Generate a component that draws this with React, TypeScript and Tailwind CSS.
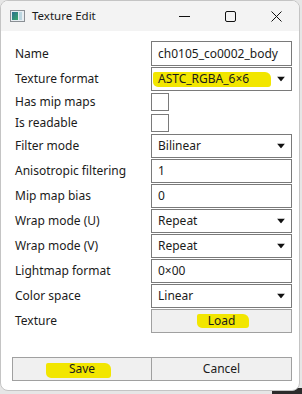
import React from "react";

const font = { fontFamily: '"Segoe UI", "Noto Sans", "Open Sans", sans-serif' };

function Arrow() {
  return (
    <svg width="8" height="5" viewBox="0 0 8 5" className="absolute right-[6px] top-1/2 -translate-y-1/2">
      <path d="M0 0 H8 L4 5 Z" fill="#111" />
    </svg>
  );
}

function Box({ children, select, h = "h-[24px]" }: { children?: React.ReactNode; select?: boolean; h?: string }) {
  return (
    <div className={`relative ${h} w-[141px] border border-[#7a7a7a] bg-white flex items-center pl-[6px] text-[12px] text-[#1b1b1b]`}>
      {children}
      {select && <Arrow />}
    </div>
  );
}

function Row({ label, children, h = "h-[24px]", mt = "mt-[1px]" }: { label: string; children: React.ReactNode; h?: string; mt?: string }) {
  return (
    <div className={`flex ${mt}`}>
      <div className={`w-[139px] ${h} flex items-center pl-[3px] text-[12px] text-[#1b1b1b]`}>{label}</div>
      {children}
    </div>
  );
}

function Highlight({ className }: { className: string }) {
  return <div className={`absolute bg-[#f2e600] ${className}`} style={{ borderRadius: "2px 6px 3px 5px" }} />;
}

export default function App() {
  return (
    <div className="relative w-[302px] h-[394px] bg-[#e6e6e6] overflow-hidden" style={font}>
      <div className="absolute right-0 bottom-0 w-[30px] h-[6px] bg-[#2b2b2b]" />
      <div className="relative w-[300px] h-[391px] bg-white border border-[#c4c4c4] rounded-[8px] overflow-hidden flex flex-col">
        {/* title bar */}
        <div className="h-[30px] bg-[#f3f3f3] flex items-center shrink-0">
          <svg width="15" height="12" viewBox="0 0 15 12" className="ml-[9px]">
            <rect x="0.5" y="0.5" width="14" height="11" fill="#e8eef2" stroke="#8a8f94" />
            <defs>
              <linearGradient id="g" x1="0" y1="0" x2="1" y2="1">
                <stop offset="0" stopColor="#2c6f8f" />
                <stop offset="1" stopColor="#3aa86a" />
              </linearGradient>
            </defs>
            <rect x="2" y="2" width="6" height="8" fill="url(#g)" />
            <rect x="9" y="2" width="3" height="8" fill="#bcd6e0" />
          </svg>
          <span className="ml-[7px] text-[11.5px] text-[#1a1a1a]">Texture Edit</span>
          <div className="ml-auto flex items-center h-full">
            <div className="w-[46px] h-full flex items-center justify-center">
              <svg width="11" height="11" viewBox="0 0 11 11"><path d="M0 5.5 H11" stroke="#111" strokeWidth="1" /></svg>
            </div>
            <div className="w-[46px] h-full flex items-center justify-center">
              <svg width="11" height="11" viewBox="0 0 11 11"><rect x="0.5" y="0.5" width="10" height="10" rx="1.5" fill="none" stroke="#111" /></svg>
            </div>
            <div className="w-[46px] h-full flex items-center justify-center">
              <svg width="11" height="11" viewBox="0 0 11 11"><path d="M0.5 0.5 L10.5 10.5 M10.5 0.5 L0.5 10.5" stroke="#111" strokeWidth="1" /></svg>
            </div>
          </div>
        </div>

        {/* form */}
        <div className="pl-[11px] pt-[10px] flex flex-col">
          <Row label="Name" h="h-[25px]" mt="mt-0">
            <Box h="h-[25px]">ch0105_co0002_body</Box>
          </Row>
          <Row label="Texture format">
            <Box select>
              <Highlight className="left-[1px] top-[4px] w-[118px] h-[15px]" />
              <span className="relative">ASTC_RGBA_6×6</span>
            </Box>
          </Row>
          <Row label="Has mip maps" h="h-[18px]" mt="mt-[2px]">
            <div className="w-[18px] h-[18px] border border-[#7a7a7a] bg-white" />
          </Row>
          <Row label="Is readable" h="h-[18px]" mt="mt-[3px]">
            <div className="w-[18px] h-[18px] border border-[#7a7a7a] bg-white" />
          </Row>
          <Row label="Filter mode" mt="mt-[2px]">
            <Box select>Bilinear</Box>
          </Row>
          <Row label="Anisotropic filtering">
            <Box>1</Box>
          </Row>
          <Row label="Mip map bias">
            <Box>0</Box>
          </Row>
          <Row label="Wrap mode (U)">
            <Box select>Repeat</Box>
          </Row>
          <Row label="Wrap mode (V)">
            <Box select>Repeat</Box>
          </Row>
          <Row label="Lightmap format">
            <Box>0×00</Box>
          </Row>
          <Row label="Color space">
            <Box select>Linear</Box>
          </Row>
          <Row label="Texture">
            <div className="relative w-[141px] h-[24px] border border-[#a0a0a0] bg-[#f0f0f0] flex items-center justify-center text-[12px] text-[#1b1b1b]">
              <Highlight className="left-[45px] top-[4px] w-[52px] h-[14px]" />
              <span className="relative">Load</span>
            </div>
          </Row>

          <div className="flex mt-[24px]">
            <div className="relative w-[140px] h-[24px] border border-[#a0a0a0] bg-[#f0f0f0] flex items-center justify-center text-[12px] text-[#1b1b1b]">
              <Highlight className="left-[33px] top-[5px] w-[65px] h-[15px]" />
              <span className="relative">Save</span>
            </div>
            <div className="w-[140px] h-[24px] border border-l-0 border-[#a0a0a0] bg-[#f0f0f0] flex items-center justify-center text-[12px] text-[#1b1b1b]">
              Cancel
            </div>
          </div>
        </div>
      </div>
    </div>
  );
}
